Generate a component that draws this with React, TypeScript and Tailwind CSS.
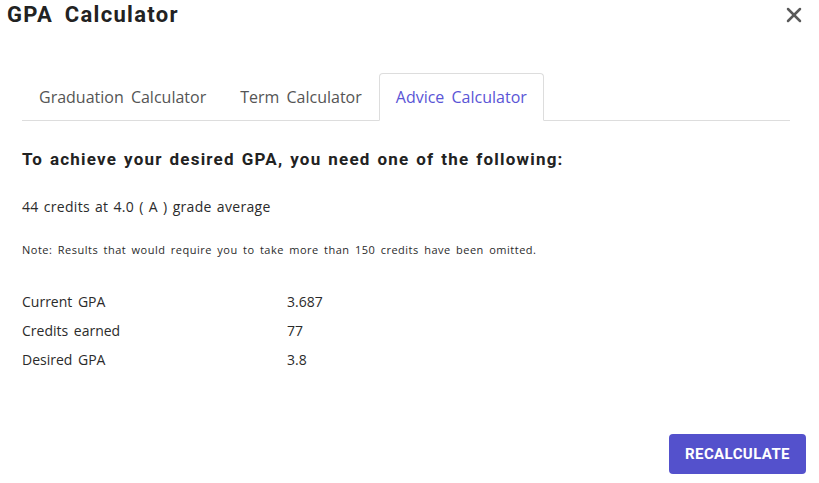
import { X } from "lucide-react";

const tabs = ["Graduation Calculator", "Term Calculator", "Advice Calculator"];

const stats = [
  { label: "Current GPA", value: "3.687" },
  { label: "Credits earned", value: "77" },
  { label: "Desired GPA", value: "3.8" },
];

export default function App() {
  const active = 2;
  return (
    <div className="w-[819px] h-[483px] bg-white relative overflow-hidden font-['Open_Sans',sans-serif] text-[#2b2b2b]">
      {/* header */}
      <div className="flex items-start justify-between pl-[7px] pr-[13px] pt-[1px]">
        <h1 className="font-['Roboto',sans-serif] font-bold text-[22px] leading-[28px] text-[#222] tracking-[1.3px] [word-spacing:5px]">
          GPA Calculator
        </h1>
        <button className="mt-[2px] text-[#5a5a5a]">
          <X className="w-[24px] h-[24px]" strokeWidth={2.5} />
        </button>
      </div>

      <div className="px-[22px] pr-[29px] mt-[44px]">
        {/* tabs */}
        <div className="flex border-b border-[#ddd]">
          {tabs.map((t, i) => (
            <div
              key={t}
              className={`-mb-px px-4 h-[48px] flex items-center text-[16px] [word-spacing:3px] border rounded-t-[4px] ${
                i === active
                  ? "border-[#ddd] border-b-white bg-white text-[#5a55d6]"
                  : "border-transparent text-[#555]"
              }`}
            >
              {t}
            </div>
          ))}
        </div>

        {/* result */}
        <h2 className="mt-[27px] font-['Roboto',sans-serif] font-bold text-[17px] leading-[22px] tracking-[1.2px] [word-spacing:1.5px] text-[#222]">
          To achieve your desired GPA, you need one of the following:
        </h2>
        <p className="mt-[27px] text-[14px] leading-[20px] tracking-[0.3px] [word-spacing:1.2px]">
          44 credits at 4.0 ( A ) grade average
        </p>
        <p className="mt-[25px] text-[11px] leading-[16px] tracking-[0.5px] [word-spacing:2px]">
          Note: Results that would require you to take more than 150 credits have been omitted.
        </p>

        <div className="mt-[34px] flex flex-col gap-[9px]">
          {stats.map((s) => (
            <div key={s.label} className="flex text-[14px] leading-[20px] [word-spacing:2px]">
              <span className="w-[265px]">{s.label}</span>
              <span>{s.value}</span>
            </div>
          ))}
        </div>
      </div>

      <div className="absolute right-[13px] bottom-[9px]">
        <button className="h-[40px] w-[137px] rounded-[4px] bg-[#5451cc] text-white font-['Roboto',sans-serif] font-bold text-[15px] tracking-[0.4px]">
          RECALCULATE
        </button>
      </div>
    </div>
  );
}
